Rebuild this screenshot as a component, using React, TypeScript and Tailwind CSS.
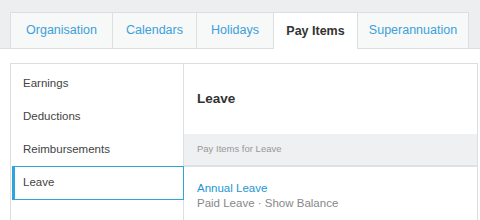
const tabs = [
  { label: 'Organisation', w: 'w-[102px]' },
  { label: 'Calendars', w: 'w-[84px]' },
  { label: 'Holidays', w: 'w-[77px]' },
  { label: 'Pay Items', w: 'w-[84px]', active: true },
  { label: 'Superannuation', w: 'w-[112px]', last: true },
];

const sideItems = ['Earnings', 'Deductions', 'Reimbursements'];

export default function App() {
  return (
    <div
      className="w-[480px] h-[220px] bg-[#eceef0] overflow-hidden flex flex-col"
      style={{ fontFamily: '"Liberation Sans", Arial, sans-serif' }}
    >
      {/* Tabs */}
      <div className="h-[48px] shrink-0 pt-[12px] pl-[10px] flex items-start">
        {tabs.map(t => (
          <div
            key={t.label}
            className={`${t.w} flex items-center justify-center border-t border-l border-[#dcdfe2] text-[12.5px] ${
              t.last ? 'border-r' : ''
            } ${
              t.active
                ? 'h-[37px] bg-white font-bold text-[#333] relative z-10'
                : 'h-[36px] bg-[#f7f8f8] text-[#3ba1d8]'
            }`}
          >
            {t.label}
          </div>
        ))}
      </div>

      {/* Panel */}
      <div className="flex-1 min-h-0 bg-white border-t border-[#dcdfe2] pt-[14px] pl-[10px] flex">
        {/* Sidebar */}
        <div className="w-[173px] border-l border-t border-[#dcdfe2] pt-[3px] flex flex-col text-[11.5px] text-[#444]">
          {sideItems.map(s => (
            <div key={s} className="h-[33px] flex items-center pl-[12px]">
              {s}
            </div>
          ))}
          <div className="h-[34px] ml-px -mr-px relative z-10 flex items-center pl-[8px] border border-l-[3px] border-[#2ea3dc]">
            Leave
          </div>
        </div>

        {/* Main */}
        <div className="w-[295px] border-l border-r border-t border-[#dcdfe2] flex flex-col">
          <div className="h-[70px] flex items-center pl-[13px] pt-px font-bold text-[13.5px] text-[#333]">
            Leave
          </div>
          <div className="h-[33px] bg-[#eef0f2] border-b-2 border-[#dde2e8] flex items-center pl-[13px] text-[9.5px] text-[#999]">
            Pay Items for Leave
          </div>
          <div className="pt-[14px] pl-[13px] text-[11.5px] leading-[15px]">
            <div className="text-[#2396d4]">Annual Leave</div>
            <div className="text-[#888]">Paid Leave · Show Balance</div>
          </div>
        </div>
      </div>
    </div>
  );
}
